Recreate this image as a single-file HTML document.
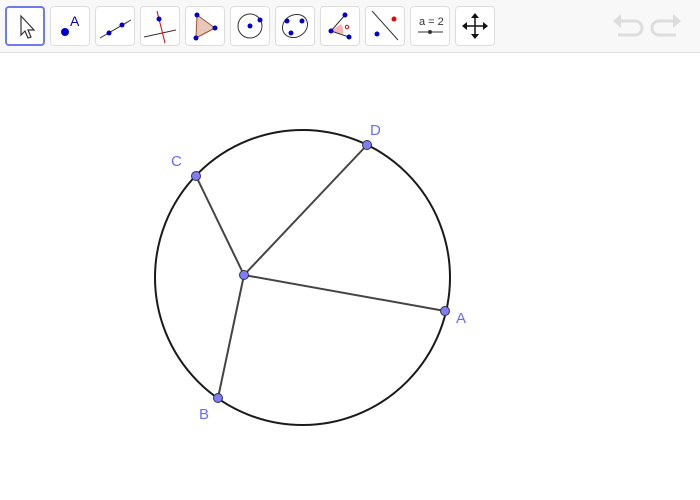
<!DOCTYPE html><html><head><style>
body{margin:0;width:700px;height:500px;background:#fff;overflow:hidden;font-family:"Liberation Sans",sans-serif}
.tb{position:absolute;left:0;top:0;width:700px;height:52px;background:#f8f8f8;border-bottom:1px solid #ddd}
.b{position:absolute;top:6px;width:38px;height:38px;background:#fff;border:1px solid #ddd;border-radius:4px}
.b svg{position:absolute;left:0;top:0}
</style></head><body>
<div class="tb">
<div class="b" style="left:5px;border:2px solid #6c7cf0;width:36px;height:36px;top:6px"><svg width="36" height="36"><path d="M14 8 L14 27 L18 23 L21 30 L24 29 L21 22 L27 22 Z" fill="#fff" stroke="#333" stroke-width="1.2"/></svg></div>
<div class="b" style="left:50px"><svg width="38" height="38"><circle cx="14" cy="25" r="4" fill="#00c"/><text x="19" y="19" font-size="14" fill="#00c" font-family="Liberation Sans">A</text></svg></div>
<div class="b" style="left:95px"><svg width="38" height="38"><line x1="4" y1="31" x2="35" y2="13" stroke="#333"/><circle cx="13" cy="26" r="2.5" fill="#00c"/><circle cx="26" cy="18" r="2.5" fill="#00c"/></svg></div>
<div class="b" style="left:140px"><svg width="38" height="38"><line x1="3" y1="30" x2="35" y2="23" stroke="#333"/><line x1="16" y1="4" x2="24" y2="36" stroke="#e00"/><circle cx="18" cy="12" r="2.5" fill="#00c"/></svg></div>
<div class="b" style="left:185px"><svg width="38" height="38"><polygon points="11,8 29,21 10,31" fill="#e6c7ba" stroke="#a0522d"/><circle cx="11" cy="8" r="2.5" fill="#00c"/><circle cx="29" cy="21" r="2.5" fill="#00c"/><circle cx="10" cy="31" r="2.5" fill="#00c"/></svg></div>
<div class="b" style="left:230px"><svg width="38" height="38"><circle cx="19" cy="19" r="12" fill="none" stroke="#333"/><circle cx="19" cy="19" r="2.5" fill="#00c"/><circle cx="29" cy="13" r="2.5" fill="#00c"/></svg></div>
<div class="b" style="left:275px"><svg width="38" height="38"><ellipse cx="19" cy="19" rx="13" ry="11" fill="none" stroke="#333" transform="rotate(-30 19 19)"/><circle cx="11" cy="14" r="2.5" fill="#00c"/><circle cx="26" cy="14" r="2.5" fill="#00c"/><circle cx="15" cy="26" r="2.5" fill="#00c"/></svg></div>
<div class="b" style="left:320px"><svg width="38" height="38"><path d="M10 24 L20 17 A12 12 0 0 1 22 27 Z" fill="#f7b5b5"/><line x1="10" y1="24" x2="24" y2="8" stroke="#333"/><line x1="10" y1="24" x2="28" y2="30" stroke="#333"/><circle cx="10" cy="24" r="2.5" fill="#00c"/><circle cx="24" cy="8" r="2.5" fill="#00c"/><circle cx="28" cy="30" r="2.5" fill="#00c"/><circle cx="26" cy="20" r="1.7" fill="none" stroke="#e00"/></svg></div>
<div class="b" style="left:365px"><svg width="38" height="38"><line x1="6" y1="4" x2="32" y2="33" stroke="#333"/><circle cx="28" cy="12" r="2.5" fill="#e00"/><circle cx="11" cy="27" r="2.5" fill="#00c"/></svg></div>
<div class="b" style="left:410px"><svg width="38" height="38"><text x="8" y="18" font-size="11" fill="#333" font-family="Liberation Sans">a = 2</text><line x1="7" y1="25" x2="32" y2="25" stroke="#333"/><circle cx="19" cy="25" r="2" fill="#333"/></svg></div>
<div class="b" style="left:455px"><svg width="38" height="38"><path d="M19 8 V30 M8 19 H30" stroke="#111" stroke-width="1.5"/><path d="M19 6 l-4 5 h8z M19 32 l-4 -5 h8z M6 19 l5 -4 v8z M32 19 l-5 -4 v8z" fill="#111"/></svg></div>
<svg style="position:absolute;left:0;top:0" width="700" height="52"><path d="M620 21 H635 A7 7 0 0 1 635 35 H618" fill="none" stroke="#ddd" stroke-width="3"/><path d="M613 21 L621 14 V28 Z" fill="#ddd"/><path d="M674 21 H659 A7 7 0 0 0 659 35 H676" fill="none" stroke="#ddd" stroke-width="3"/><path d="M681 21 L673 14 V28 Z" fill="#ddd"/></svg>
</div>
<svg style="position:absolute;left:0;top:0" width="700" height="500">
<circle cx="302.5" cy="277.5" r="147.5" fill="none" stroke="#1a1a1a" stroke-width="2"/>
<g stroke="#444" stroke-width="2"><line x1="244" y1="275" x2="445" y2="311"/><line x1="244" y1="275" x2="218" y2="398"/><line x1="244" y1="275" x2="196" y2="176"/><line x1="244" y1="275" x2="367" y2="145"/></g>
<g fill="#7d7dff" stroke="#333" stroke-width="1"><circle cx="445" cy="311" r="4.5"/><circle cx="218" cy="398" r="4.5"/><circle cx="196" cy="176" r="4.5"/><circle cx="367" cy="145" r="4.5"/><circle cx="244" cy="275" r="4.5"/></g>
<g fill="#6b6bff" font-size="15" font-family="Liberation Sans"><text x="456" y="323">A</text><text x="199" y="419">B</text><text x="171" y="166">C</text><text x="370" y="135">D</text></g>
</svg>
</body></html>
